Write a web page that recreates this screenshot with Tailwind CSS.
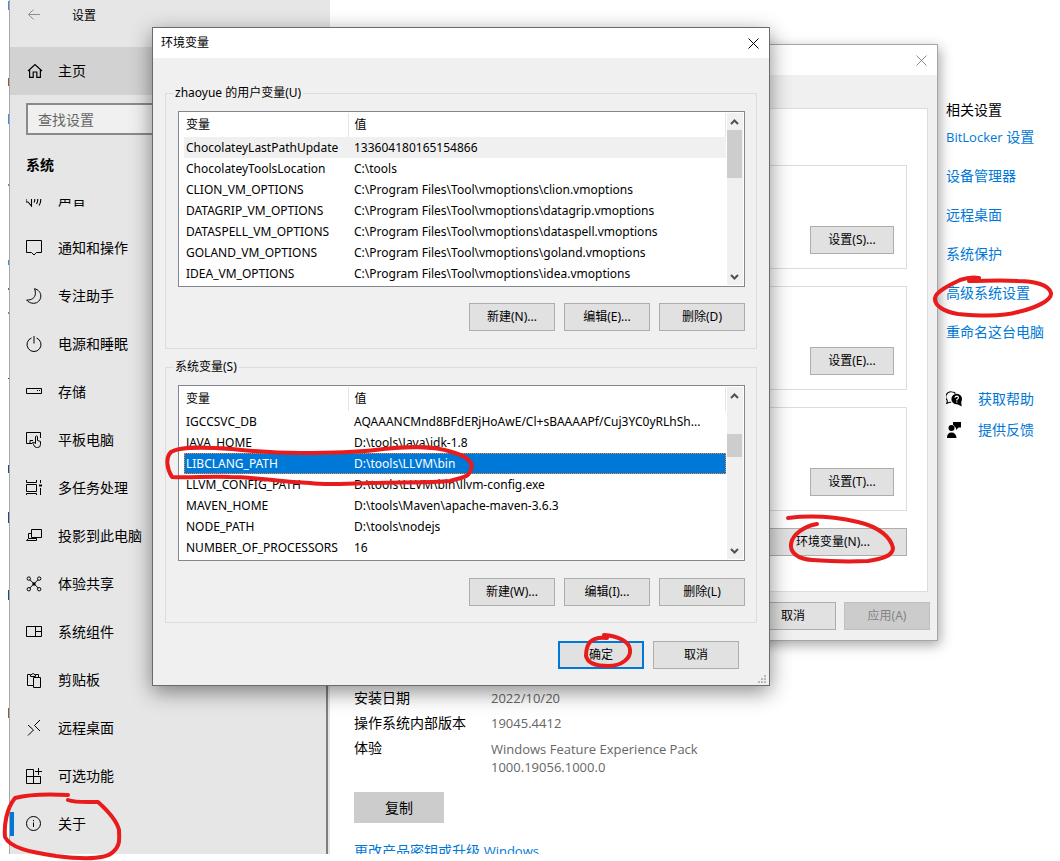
<!DOCTYPE html>
<html lang="zh-CN">
<head>
    <meta charset="UTF-8">
    <meta name="viewport" content="width=device-width, initial-scale=1.0">
    <title>设置 - 关于</title>
    <script src="https://cdn.jsdelivr.net/npm/@tailwindcss/browser@4"></script>
</head>
<body class="relative h-screen overflow-hidden bg-white text-black font-['Open_Sans','Noto_Sans_CJK_SC',sans-serif]">

    <!-- 设置窗口 -->
    <div class="flex h-full pb-[7px] pl-2 text-sm">
        <svg class="w-px shrink-0 h-full" aria-hidden="true">
            <path d="M0 1h1v9H0zM0 114h1v10H0zM0 184h1v2H0zM0 260h1v5H0zM0 312h1v2H0z" fill="#3f8fdc"/>
            <path d="M0 78h1v8H0zM0 288h1v2H0zM0 708h1v10H0z" fill="#8a5a3c"/>
            <path d="M0 378h1v1H0zM0 465h1v8H0zM0 512h1v11H0zM0 590h1v10H0z" fill="#27458c"/>
        </svg>
        <nav class="flex w-[321px] shrink-0 flex-col overflow-hidden border-l border-[#a8a8a8] bg-[#e6e6e6]">
            <div class="flex h-[47px] shrink-0 items-start pl-[17px] pt-2">
                <button class="h-4 w-4" aria-label="返回">
                    <svg class="h-4 w-4" viewBox="0 0 16 16" fill="none" stroke="#8f8f8f"><path d="M13 6.5H1.5M6.5 1.5l-5 5 5 5"/></svg>
                </button>
                <h1 class="ml-[29px] text-xs leading-4">设置</h1>
            </div>
            <a href="#" class="flex h-12 shrink-0 items-center bg-[#d2d2d2] pl-[17px]">
                <svg class="h-4 w-4" viewBox="0 0 16 16" fill="none" stroke="currentColor" stroke-width="1.2"><path d="M1 8l7-6.5L15 8M2.6 7v7.4h3.6V9h3.6v5.4h3.6V7"/></svg>
                <span class="ml-[15px]">主页</span>
            </a>
            <input type="text" aria-label="查找设置" placeholder="查找设置" class="ml-4 mr-6 mt-2 h-8 shrink-0 border-2 border-[#8a8a8a] bg-[#f0f0f0] px-2.5 text-sm placeholder:text-[#666]">
            <h2 class="h-16 shrink-0 pl-4 pt-5 text-sm leading-5 font-bold">系统</h2>
            <div class="flex min-h-0 flex-1 overflow-hidden">
                <ul class="-mt-[23px] flex-1">
                    <li><a href="#" class="flex h-12 items-center gap-4 pl-4">
                        <svg class="h-4 w-4" viewBox="0 0 16 16" fill="none" stroke="currentColor" stroke-width="1.1"><path d="M0 6h2l3.5-4v12L2 10H0zM8 5.5q1.5 2.5 0 5M10.500 4q2.500 4 0 8M13 2.500q3.500 5.500 0 11"/></svg>声音</a></li>
                    <li><a href="#" class="flex h-12 items-center gap-4 pl-4">
                        <svg class="h-4 w-4" viewBox="0 0 16 16" fill="none" stroke="currentColor"><path d="M.5.500h15v12h-5L8 15l-2.500-2.500h-5z"/></svg>通知和操作</a></li>
                    <li><a href="#" class="flex h-12 items-center gap-4 pl-4">
                        <svg class="h-4 w-4" viewBox="0 0 16 16" fill="none" stroke="currentColor"><path d="M8.500.700c4 1 6.300 3.800 6.300 7.300 0 4-3 7.300-7.300 7.300-3 0-5.300-1.300-6.900-3.300 5 .3 8.400-2 8.800-6.300.1-2-.2-3.500-.9-5z"/></svg>专注助手</a></li>
                    <li><a href="#" class="flex h-12 items-center gap-4 pl-4">
                        <svg class="h-4 w-4" viewBox="0 0 16 16" fill="none" stroke="currentColor"><path d="M5.500 2A7 7 0 1 0 10.500 2M8 0v7.500"/></svg>电源和睡眠</a></li>
                    <li><a href="#" class="flex h-12 items-center gap-4 pl-4">
                        <svg class="h-4 w-4" viewBox="0 0 16 16" fill="none" stroke="currentColor"><path d="M.5 4.500h15v5H.5z"/><path d="M11 6.500h1M13 6.500h1"/></svg>存储</a></li>
                    <li><a href="#" class="flex h-12 items-center gap-4 pl-4">
                        <svg class="h-4 w-4" viewBox="0 0 16 16" fill="none" stroke="currentColor"><path d="M6 11.500H.5v-11h14V6M4 11.500v-3h3"/><path d="M9.500 11V4.500q1-1.200 2 0v4l3 1v3q0 3-3 3h-1q-2 0-3-3l-1-2q1.200-.8 3 1z"/></svg>平板电脑</a></li>
                    <li><a href="#" class="flex h-12 items-center gap-4 pl-4">
                        <svg class="h-4 w-4" viewBox="0 0 16 16" fill="none" stroke="currentColor"><path d="M.5 0v2.500h10V0M.5 4.500h10v7H.5zM.5 15v-1.500h10V15M14.500 0v3M14.500 8v7"/><path d="M13 4.500h3v2h-3z" fill="currentColor" stroke="none"/></svg>多任务处理</a></li>
                    <li><a href="#" class="flex h-12 items-center gap-4 pl-4">
                        <svg class="h-4 w-4" viewBox="0 0 16 16" fill="none" stroke="currentColor"><path d="M5.500 1.500h10v8h-10zM5.500 5.500h-3v5M2.500 10.500h8v-1M2.500 10.500l-2 2h10v-2"/></svg>投影到此电脑</a></li>
                    <li><a href="#" class="flex h-12 items-center gap-4 pl-4">
                        <svg class="h-4 w-4" viewBox="0 0 16 16" fill="none" stroke="currentColor"><path d="M4 3.800L12.200 12M12 3.800L3.800 12"/><circle cx="2.800" cy="2.600" r="1.700"/><circle cx="13.200" cy="2.600" r="1.700"/><circle cx="2.800" cy="13.200" r="1.700"/><circle cx="13.200" cy="13.200" r="1.700"/><circle cx="8" cy="8" r="1.200" fill="currentColor"/></svg>体验共享</a></li>
                    <li><a href="#" class="flex h-12 items-center gap-4 pl-4">
                        <svg class="h-4 w-4" viewBox="0 0 16 16" fill="none" stroke="currentColor"><path d="M.5 2.500h15v10H.5zM9.500 2.500v10M9.500 7.500h6"/></svg>系统组件</a></li>
                    <li><a href="#" class="flex h-12 items-center gap-4 pl-4">
                        <svg class="h-4 w-4" viewBox="0 0 16 16" fill="none" stroke="currentColor"><path d="M7 13.500H1.500v-11H4M10 2.500h2.500V5M4.500 4.500v-2h1.500q1-2.500 2 0h1.500v2zM7.500 5.500h7v10h-7z"/></svg>剪贴板</a></li>
                    <li><a href="#" class="flex h-12 items-center gap-4 pl-4">
                        <svg class="h-4 w-4" viewBox="0 0 16 16" fill="none" stroke="currentColor"><path d="M2 5l5.500 5L2 15.500M14 0L8.500 5.500 14 11"/></svg>远程桌面</a></li>
                    <li><a href="#" class="flex h-12 items-center gap-4 pl-4">
                        <svg class="h-4 w-4" viewBox="0 0 16 16" fill="none" stroke="currentColor"><path d="M7.500 15.500V1.500h-7v14h14v-7H.5M14.500 15.500v-7M12.500 0v7M9 3.500h7"/></svg>可选功能</a></li>
                    <li><a href="#" aria-current="page" class="flex h-12 items-center">
                        <span class="mr-3 h-6 w-1 bg-[#0078d7]"></span>
                        <svg class="mr-4 h-4 w-4" viewBox="0 0 16 16" fill="none" stroke="currentColor"><circle cx="7.500" cy="7.500" r="7"/><path d="M7.500 6.500V11M7.500 4v1.200"/></svg>关于</a></li>
                </ul>
                <div class="mr-0.5 w-0.5 bg-[#7f7f7f]"></div>
            </div>
        </nav>

        <main class="flex-1 overflow-hidden pl-6 pt-[688px]">
            <dl class="grid grid-cols-[137px_1fr] text-sm leading-5">
                <dt class="h-[25px]">安装日期</dt>
                <dd class="text-[13px] text-[#666]">2022/10/20</dd>
                <dt class="h-[25px]">操作系统内部版本</dt>
                <dd class="text-[13px] text-[#666]">19045.4412</dd>
                <dt>体验</dt>
                <dd class="pt-0.5 text-[13px] leading-[18px] text-[#666]">Windows Feature Experience Pack<br>1000.19056.1000.0</dd>
            </dl>
            <button class="mt-4 block h-[31px] w-[90px] bg-[#ccc] text-sm">复制</button>
            <a href="#" class="mt-[18px] block leading-5 text-[#0078d7]">更改产品密钥或升级 <span class="text-[13px]">Windows</span></a>
        </main>

        <aside class="w-[114px] shrink-0 pt-[100px] leading-5 whitespace-nowrap">
            <h2>相关设置</h2>
            <ul class="mt-[7px] space-y-[19px] text-[#0078d7]">
                <li><a href="#"><span class="text-[13px]">BitLocker</span> 设置</a></li>
                <li><a href="#">设备管理器</a></li>
                <li><a href="#">远程桌面</a></li>
                <li><a href="#">系统保护</a></li>
                <li><a href="#">高级系统设置</a></li>
                <li><a href="#">重命名这台电脑</a></li>
            </ul>
            <ul class="mt-[47px] space-y-[11px] text-[#0078d7]">
                <li><a href="#" class="flex items-center gap-4">
                    <svg class="h-4 w-4 text-black" viewBox="0 0 16 16"><path d="M1.500 9.500a5 5 0 0 1 4-8.700q2.500.1 4 1.700M1.500 9.500l-.8 3 3-1.200h1.500" fill="none" stroke="currentColor" stroke-width="1.100"/><circle cx="10.700" cy="8" r="5.300" fill="currentColor"/><path d="M11 13l4.700 2.500-.7-6z" fill="currentColor"/><path d="M9 6.800q.1-1.600 1.800-1.600 1.600.1 1.600 1.500 0 .9-1.600 1.900v.9M10.800 10.500v1.100" fill="none" stroke="#fff" stroke-width="1.200"/></svg>获取帮助</a></li>
                <li><a href="#" class="flex items-center gap-4">
                    <svg class="h-4 w-4 text-black" viewBox="0 0 16 16" fill="currentColor"><circle cx="5.500" cy="6" r="3"/><path d="M1 16q0-5.500 4.500-5.500t5 5.500zM7 0h8v5.500h-2.500L10 8V5.500H9Q8.500 3.500 7 2.800z"/></svg>提供反馈</a></li>
            </ul>
        </aside>
    </div>

    <!-- 系统属性对话框 -->
    <section aria-label="系统属性" class="absolute left-[526px] top-11 flex w-[412px] flex-col border border-[#a5a5a5] bg-[#f0f0f0] text-xs shadow-[2px_4px_12px_rgba(0,0,0,0.35)] font-['Noto_Sans','Noto_Sans_CJK_SC',sans-serif]">
        <header class="flex h-[30px] items-center justify-end bg-white pr-2.5">
            <button aria-label="关闭"><svg class="h-[11px] w-[11px]" viewBox="0 0 11 11" stroke="#8a8a8a"><path d="M.5.500l10 10M10.500.500l-10 10"/></svg></button>
        </header>
        <div class="ml-2.5 mr-[9px] mt-[33px] flex flex-col gap-[17px] border border-[#dcdcdc] bg-white pb-[35px] pl-5 pr-5 pt-14">
            <div class="flex h-[104px] items-end justify-end border border-[#dcdcdc] pb-3.5 pr-3">
                <button class="h-7 w-[84px] border border-[#adadad] bg-[#e1e1e1]">设置(S)...</button>
            </div>
            <div class="flex h-[104px] items-end justify-end border border-[#dcdcdc] pb-3.5 pr-3">
                <button class="h-7 w-[84px] border border-[#adadad] bg-[#e1e1e1]">设置(E)...</button>
            </div>
            <div class="flex h-[104px] items-end justify-end border border-[#dcdcdc] pb-3.5 pr-3">
                <button class="h-7 w-[84px] border border-[#adadad] bg-[#e1e1e1]">设置(T)...</button>
            </div>
            <button class="h-7 w-[148px] self-end border border-[#adadad] bg-[#e1e1e1]">环境变量(N)...</button>
        </div>
        <footer class="flex justify-end gap-2 pb-2.5 pr-[7px] pt-2.5">
            <button class="h-7 w-[86px] border border-[#adadad] bg-[#e1e1e1]">确定</button>
            <button class="h-7 w-[86px] border border-[#adadad] bg-[#e1e1e1]">取消</button>
            <button disabled class="h-7 w-[86px] border border-[#bfbfbf] bg-[#ccc] text-[#838383]">应用(A)</button>
        </footer>
    </section>

    <!-- 环境变量对话框 -->
    <section aria-labelledby="env-title" class="absolute left-[152px] top-[27px] w-[618px] border border-[#6b6b6b] bg-[#f0f0f0] text-xs shadow-[0_6px_20px_rgba(0,0,0,0.45)] font-['Noto_Sans','Noto_Sans_CJK_SC',sans-serif]">
        <header class="flex h-[30px] items-center justify-between bg-white pl-2 pr-2.5">
            <h2 id="env-title">环境变量</h2>
            <button aria-label="关闭"><svg class="h-[11px] w-[11px]" viewBox="0 0 11 11" stroke="#000"><path d="M.5.500l10 10M10.500.500l-10 10"/></svg></button>
        </header>

        <div class="space-y-2.5 px-3 pt-[27px]">
            <fieldset class="border border-[#dcdcdc] pb-[17px] pl-3 pr-[11px]">
                <legend class="-ml-[5px] px-0.5 leading-4">zhaoyue 的用户变量(U)</legend>
                <div class="mt-2.5 flex h-44 border border-[#828790] bg-white py-px pl-[5px] pr-px">
                    <table class="flex-1 table-fixed self-start text-left whitespace-nowrap">
                        <thead>
                            <tr class="h-6">
                                <th class="w-[164px] border-r border-[#e5e5e5] pl-0.5 font-normal">变量</th>
                                <th class="border-r border-[#e5e5e5] pl-1.5 font-normal">值</th>
                            </tr>
                        </thead>
                        <tbody>
                            <tr class="h-[21px] bg-[#f0f0f0]"><td class="pl-0.5">ChocolateyLastPathUpdate</td><td class="pl-1.5">133604180165154866</td></tr>
                            <tr class="h-[21px]"><td class="pl-0.5">ChocolateyToolsLocation</td><td class="pl-1.5">C:\tools</td></tr>
                            <tr class="h-[21px]"><td class="pl-0.5">CLION_VM_OPTIONS</td><td class="pl-1.5">C:\Program Files\Tool\vmoptions\clion.vmoptions</td></tr>
                            <tr class="h-[21px]"><td class="pl-0.5">DATAGRIP_VM_OPTIONS</td><td class="pl-1.5">C:\Program Files\Tool\vmoptions\datagrip.vmoptions</td></tr>
                            <tr class="h-[21px]"><td class="pl-0.5">DATASPELL_VM_OPTIONS</td><td class="pl-1.5">C:\Program Files\Tool\vmoptions\dataspell.vmoptions</td></tr>
                            <tr class="h-[21px]"><td class="pl-0.5">GOLAND_VM_OPTIONS</td><td class="pl-1.5">C:\Program Files\Tool\vmoptions\goland.vmoptions</td></tr>
                            <tr class="h-[21px]"><td class="pl-0.5">IDEA_VM_OPTIONS</td><td class="pl-1.5">C:\Program Files\Tool\vmoptions\idea.vmoptions</td></tr>
                        </tbody>
                    </table>
                    <div class="ml-px flex w-4 flex-col bg-[#f0f0f0]">
                        <svg class="h-[17px] w-4" viewBox="0 0 16 17" fill="none" stroke="#505050" stroke-width="2"><path d="M4 11l3.500-3.500L11 11"/></svg>
                        <div class="h-12 w-[15px] bg-[#cdcdcd]"></div>
                        <svg class="mt-auto h-[17px] w-4" viewBox="0 0 16 17" fill="none" stroke="#505050" stroke-width="2"><path d="M4 7l3.500 3.500L11 7"/></svg>
                    </div>
                </div>
                <div class="mt-4 flex justify-end gap-[9px]">
                    <button class="h-7 w-[86px] border border-[#adadad] bg-[#e1e1e1]">新建(N)...</button>
                    <button class="h-7 w-[86px] border border-[#adadad] bg-[#e1e1e1]">编辑(E)...</button>
                    <button class="h-7 w-[86px] border border-[#adadad] bg-[#e1e1e1]">删除(D)</button>
                </div>
            </fieldset>

            <fieldset class="border border-[#dcdcdc] pb-4 pl-3 pr-[11px]">
                <legend class="-ml-[5px] px-0.5 leading-4">系统变量(S)</legend>
                <div class="mt-2.5 flex h-44 border border-[#828790] bg-white py-px pl-[5px] pr-px">
                    <table class="flex-1 table-fixed self-start text-left whitespace-nowrap">
                        <thead>
                            <tr class="h-6">
                                <th class="w-[164px] border-r border-[#e5e5e5] pl-0.5 font-normal">变量</th>
                                <th class="border-r border-[#e5e5e5] pl-1.5 font-normal">值</th>
                            </tr>
                        </thead>
                        <tbody>
                            <tr class="h-[21px]"><td class="pl-0.5">IGCCSVC_DB</td><td class="pl-1.5">AQAAANCMnd8BFdERjHoAwE/Cl+sBAAAAPf/Cuj3YC0yRLhSh...</td></tr>
                            <tr class="h-[21px]"><td class="pl-0.5">JAVA_HOME</td><td class="pl-1.5">D:\tools\Java\jdk-1.8</td></tr>
                            <tr class="h-[21px] bg-[#0078d7] text-white outline-1 -outline-offset-1 outline-dotted outline-[#ff8728]"><td class="pl-0.5">LIBCLANG_PATH</td><td class="pl-1.5">D:\tools\LLVM\bin</td></tr>
                            <tr class="h-[21px]"><td class="pl-0.5">LLVM_CONFIG_PATH</td><td class="pl-1.5">D:\tools\LLVM\bin\llvm-config.exe</td></tr>
                            <tr class="h-[21px]"><td class="pl-0.5">MAVEN_HOME</td><td class="pl-1.5">D:\tools\Maven\apache-maven-3.6.3</td></tr>
                            <tr class="h-[21px]"><td class="pl-0.5">NODE_PATH</td><td class="pl-1.5">D:\tools\nodejs</td></tr>
                            <tr class="h-[21px]"><td class="pl-0.5">NUMBER_OF_PROCESSORS</td><td class="pl-1.5">16</td></tr>
                        </tbody>
                    </table>
                    <div class="ml-px flex w-4 flex-col bg-[#f0f0f0]">
                        <svg class="h-[17px] w-4" viewBox="0 0 16 17" fill="none" stroke="#505050" stroke-width="2"><path d="M4 11l3.500-3.500L11 11"/></svg>
                        <div class="mt-[30px] h-[23px] w-[15px] bg-[#cdcdcd]"></div>
                        <svg class="mt-auto h-[17px] w-4" viewBox="0 0 16 17" fill="none" stroke="#505050" stroke-width="2"><path d="M4 7l3.500 3.500L11 7"/></svg>
                    </div>
                </div>
                <div class="mt-[17px] flex justify-end gap-[9px]">
                    <button class="h-7 w-[86px] border border-[#adadad] bg-[#e1e1e1]">新建(W)...</button>
                    <button class="h-7 w-[86px] border border-[#adadad] bg-[#e1e1e1]">编辑(I)...</button>
                    <button class="h-7 w-[86px] border border-[#adadad] bg-[#e1e1e1]">删除(L)</button>
                </div>
            </fieldset>
        </div>

        <footer class="flex justify-end gap-[9px] pb-4 pr-[30px] pt-[18px]">
            <button class="h-7 w-[86px] border-2 border-[#0078d7] bg-[#e1e1e1]">确定</button>
            <button class="h-7 w-[86px] border border-[#adadad] bg-[#e1e1e1]">取消</button>
        </footer>
        <svg class="absolute bottom-0.5 right-[3px] h-2 w-2" viewBox="0 0 8 8" fill="#b9b9b9" aria-hidden="true"><path d="M6 0h2v2H6zM3 3h2v2H3zM6 3h2v2H6zM0 6h2v2H0zM3 6h2v2H3zM6 6h2v2H6z"/></svg>
    </section>

    <!-- 红笔标注 -->
    <svg class="pointer-events-none absolute left-0 top-0 h-[861px] w-[1060px]" viewBox="0 0 1060 861" fill="none" stroke="#e81c1c" stroke-width="4" stroke-linecap="round" stroke-linejoin="round" aria-hidden="true">
        <path d="M68 795C50 794 30 794 15 798C6 809 4 826 5 837C10 848 30 852 56 856C80 859 105 860 113 852C121 845 119 838 119 830C117 821 108 811 98 802C90 802 76 803 68 800"/>
        <path d="M172 477C167 469 165 458 171 452C180 446 205 447 232 449C260 452 275 453 300 453C325 453 350 453 375 450C405 446 435 446 452 452C466 456 474 462 471 469C469 478 462 477 450 481C430 483 400 482 370 483C345 484 325 485 310 483C280 482 255 477 230 477C210 476 190 478 172 477"/>
        <path d="M607 638C600 637 594 638 590 642C586 647 586 653 586 656C588 664 598 666 608 666C622 666 631 658 630 650C630 641 617 636 604 635"/>
        <path d="M788 518C812 515 836 517 858 522C880 527 891 538 893 548C893 556 882 559 868 561C845 562 825 561 812 560C797 559 790 552 791 544C792 535 804 526 817 524"/>
        <path d="M979 278C973 277 966 278 960 280C950 285 936 291 935 298C934 306 945 312 958 314C980 316 1003 317 1018 312C1036 308 1052 300 1051 293C1049 285 1035 281 1018 281C1000 280 985 281 969 281"/>
    </svg>
</body>
</html>
